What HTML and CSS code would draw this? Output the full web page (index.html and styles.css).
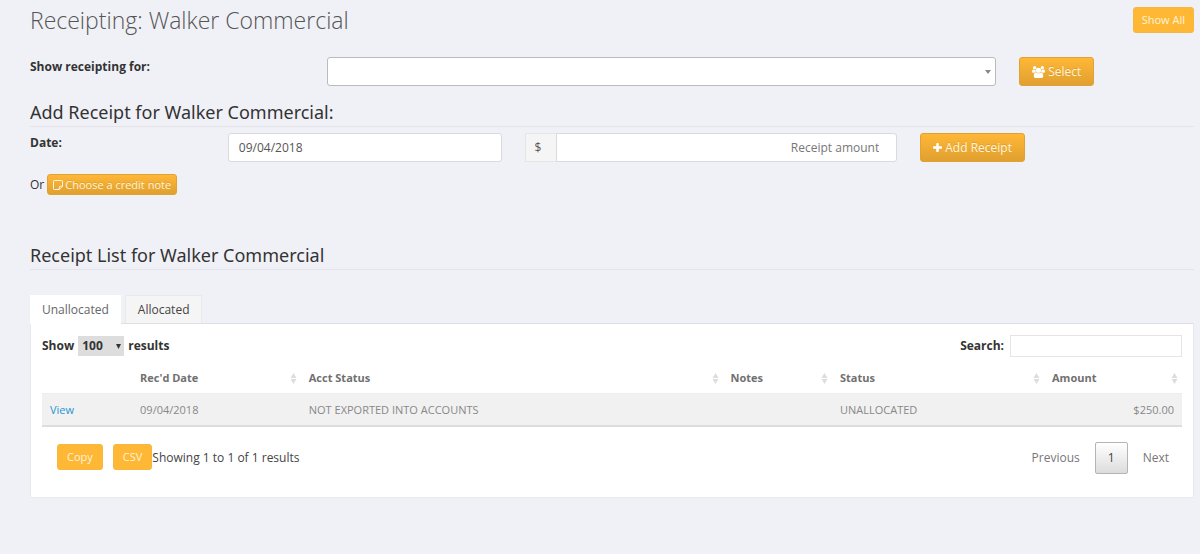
FILE: index.html
```html
<!DOCTYPE html>
<html lang="en">
<head>
<meta charset="utf-8">
<title>Receipting: Walker Commercial</title>
<link rel="stylesheet" href="styles.css">
</head>
<body>
<main class="page">
  <header class="page-head">
    <h1 class="page-title">Receipting: Walker Commercial</h1>
    <button type="button" class="btn btn-flat">Show All</button>
  </header>

  <form class="grid-row filter-row">
    <label class="col-label-wide" for="company">Show receipting for:</label>
    <select class="control select-company" id="company"><option></option></select>
    <button type="button" class="btn btn-grad">
      <svg class="icon icon-users" viewBox="0 0 1920 1792" aria-hidden="true"><path d="M593 896q-162 5-265 128h-134q-82 0-138-40.500t-56-118.500q0-353 124-353 6 0 43.500 21t97.500 42.500 119 21.500q67 0 133-23-5 37-5 66 0 139 81 256zm1071 637q0 120-73 189.500t-194 69.500h-874q-121 0-194-69.500t-73-189.500q0-53 3.500-103.500t14-109 26.500-108.500 43-97.500 62-81 85.500-53.500 111.500-20q10 0 43 21.500t73 48 107 48 135 21.500 135-21.500 107-48 73-48 43-21.500q61 0 111.500 20t85.500 53.500 62 81 43 97.500 26.500 108.500 14 109 3.500 103.500z"/><circle cx="384" cy="256" r="256"/><circle cx="960" cy="640" r="384"/><circle cx="1536" cy="256" r="256"/><path d="M1920 865q0 78-56 118.500t-138 40.500h-134q-103-123-265-128 81-117 81-256 0-29-5-66 66 23 133 23 59 0 119-21.500t97.500-42.500 43.500-21q124 0 124 353z"/></svg>
      Select
    </button>
  </form>

  <h2 class="section-title">Add Receipt for Walker Commercial:</h2>
  <form class="grid-row receipt-row">
    <label class="col-label" for="date">Date:</label>
    <input class="control col-date" id="date" type="text" value="09/04/2018">
    <div class="input-group">
      <label class="addon" for="amount">$</label>
      <input class="control amount" id="amount" type="text" placeholder="Receipt amount">
    </div>
    <button type="button" class="btn btn-grad">
      <svg class="icon icon-plus" viewBox="0 0 11 11" aria-hidden="true"><path d="M4 1q0-1 1-1h1q1 0 1 1v3h3q1 0 1 1v1q0 1-1 1H7v3q0 1-1 1H5q-1 0-1-1V7H1Q0 7 0 6V5q0-1 1-1h3z"/></svg>
      Add Receipt
    </button>
  </form>
  <div class="credit">
    Or
    <button type="button" class="btn btn-grad btn-small">
      <svg class="icon icon-note" viewBox="0 0 12 12" aria-hidden="true"><path d="M1.500.6h9q.9 0 .9.9v6L7.500 11.400h-6q-.9 0-.9-.9v-9q0-.9.9-.9zM11.400 7.500h-3q-.9 0-.9.9v3"/></svg>
      Choose a credit note
    </button>
  </div>

  <h2 class="section-title list-title">Receipt List for Walker Commercial</h2>

  <nav class="tabs">
    <button type="button" class="tab tab-active">Unallocated</button>
    <button type="button" class="tab">Allocated</button>
  </nav>
  <section class="panel">
    <div class="table-tools">
      <label class="tool">Show
        <select class="length"><option>100</option></select>
        results</label>
      <label class="tool">Search: <input class="search" type="text"></label>
    </div>
    <table class="receipts">
      <colgroup>
        <col class="c-view"><col class="c-date"><col class="c-acct"><col class="c-notes"><col class="c-status"><col class="c-amount">
      </colgroup>
      <thead>
        <tr>
          <th></th>
          <th><div class="sort">Rec'd Date<svg class="arrows" viewBox="0 0 7 11" aria-hidden="true"><path d="M3.500 0L6.500 5h-6zM.5 6h6l-3 5z"/></svg></div></th>
          <th><div class="sort">Acct Status<svg class="arrows" viewBox="0 0 7 11" aria-hidden="true"><path d="M3.500 0L6.500 5h-6zM.5 6h6l-3 5z"/></svg></div></th>
          <th><div class="sort">Notes<svg class="arrows" viewBox="0 0 7 11" aria-hidden="true"><path d="M3.500 0L6.500 5h-6zM.5 6h6l-3 5z"/></svg></div></th>
          <th><div class="sort">Status<svg class="arrows" viewBox="0 0 7 11" aria-hidden="true"><path d="M3.500 0L6.500 5h-6zM.5 6h6l-3 5z"/></svg></div></th>
          <th><div class="sort">Amount<svg class="arrows" viewBox="0 0 7 11" aria-hidden="true"><path d="M3.500 0L6.500 5h-6zM.5 6h6l-3 5z"/></svg></div></th>
        </tr>
      </thead>
      <tbody>
        <tr>
          <td><a class="view" href="#">View</a></td>
          <td>09/04/2018</td>
          <td>NOT EXPORTED INTO ACCOUNTS</td>
          <td></td>
          <td>UNALLOCATED</td>
          <td class="money">$250.00</td>
        </tr>
      </tbody>
    </table>
    <footer class="table-foot">
      <div class="exports">
        <button type="button" class="btn btn-flat">Copy</button>
        <button type="button" class="btn btn-flat">CSV</button>
      </div>
      <span class="info">Showing 1 to 1 of 1 results</span>
      <nav class="pager">
        <button type="button" class="page-btn">Previous</button>
        <button type="button" class="page-btn page-current">1</button>
        <button type="button" class="page-btn">Next</button>
      </nav>
    </footer>
  </section>
</main>
</body>
</html>
```
FILE: styles.css
```css
* { box-sizing: border-box; }
body {
  margin: 0;
  background: #f0f1f7;
  color: #333;
  font: 12px/18px "Open Sans", "Noto Sans", sans-serif;
}
button, input, select { font: inherit; color: inherit; }
button { cursor: pointer; }
.page { padding: 6px 6px 32px 30px; }

.page-head { display: flex; justify-content: space-between; align-items: center; }
.page-title { margin: 0; font-size: 23px; line-height: 28px; font-weight: 300; color: #555; }

.grid-row {
  display: grid;
  grid-template-columns: repeat(12, minmax(0, 1fr));
  column-gap: 23px;
  align-items: start;
}
.grid-row label { font-weight: 700; line-height: 20px; }
.grid-row .btn { justify-self: start; }
.filter-row { margin-top: 23px; }
.col-label-wide { grid-column: span 3; }
.col-label { grid-column: span 2; }
.col-date { grid-column: span 3; }
.filter-row .btn, .receipt-row .btn { grid-column: span 2; }

.control {
  width: 100%;
  height: 29px;
  padding: 0 10px;
  border: 1px solid #d9dadf;
  border-radius: 3px;
  background: #fff;
  color: #555;
}
.select-company {
  grid-column: span 7;
  border-color: #bbb;
  appearance: none;
  background: #fff url("data:image/svg+xml,%3Csvg xmlns='http://www.w3.org/2000/svg' viewBox='0 0 6 4'%3E%3Cpath d='M0 0h6L3 4z' fill='%23888'/%3E%3C/svg%3E") no-repeat right 4px center / 6px 4px;
}
.input-group { grid-column: span 4; display: flex; }
.grid-row .addon {
  flex: none;
  width: 31px;
  border: 1px solid #e5e5e5;
  border-right: 0;
  background: #f5f5f5;
  color: #555;
  font-weight: 400;
  line-height: 27px;
  padding-left: 9px;
}
.amount { flex: 1; min-width: 0; padding-right: 17px; border-radius: 0 3px 3px 0; text-align: right; }
.amount::placeholder { color: #777; opacity: 1; }

.btn {
  display: inline-flex;
  align-items: center;
  justify-content: center;
  border: 1px solid #f9b53c;
  border-radius: 3px;
  background: #ffb736;
  color: #fff4dc;
  white-space: nowrap;
}
.btn-flat { height: 26px; padding: 0 8px; font-size: 11px; }
.btn-grad {
  height: 29px;
  padding: 0 12px;
  gap: 3px;
  border-color: #e0a233;
  background: linear-gradient(#ffb736, #e0a030);
  text-shadow: 0 -1px 0 rgba(0, 0, 0, .1);
}
.btn-small { height: 21px; padding: 0 5px; gap: 2px; font-size: 11px; }
.icon { flex: none; fill: #fff; }
.icon-users { width: 13px; height: 12px; }
.icon-plus { width: 9px; height: 9px; }
.icon-note { width: 10px; height: 10px; fill: none; stroke: #fff4dc; stroke-width: 1.2; }

.section-title {
  margin: 14px 0 6px;
  padding-bottom: 1px;
  border-bottom: 1px solid #e5e5e9;
  font-family: "Noto Sans", "Open Sans", sans-serif;
  font-size: 18px;
  line-height: 25px;
  font-weight: 400;
}
.credit { display: flex; align-items: center; gap: 3px; margin-top: 12px; }
.list-title { margin: 48px 0 25px; }

.tabs { display: flex; gap: 4px; }
.tab {
  height: 28px;
  padding: 0 12px;
  border: 1px solid #e9e9ec;
  border-bottom: 0;
  background: #f5f5f5;
  color: #444;
}
.tab-active { height: 29px; margin-bottom: -1px; padding: 0 11px; border-color: #fff; background: #fff; color: #666; position: relative; }
.panel {
  padding: 11px 11px 23px;
  border: 1px solid #e8e9ed;
  border-top-color: #dfe0e5;
  background: #fff;
}
.table-tools { display: flex; justify-content: space-between; align-items: center; }
.tool { display: flex; align-items: center; gap: 4px; font-weight: 700; }
.length {
  width: 46px;
  height: 20px;
  padding: 0 4px;
  border: 0;
  border-radius: 0;
  appearance: none;
  background: #ddd url("data:image/svg+xml,%3Csvg xmlns='http://www.w3.org/2000/svg' viewBox='0 0 5 5'%3E%3Cpath d='M0 0h5L2.500 5z' fill='%23333'/%3E%3C/svg%3E") no-repeat right 3px center / 5px 5px;
}
.search { width: 172px; height: 22px; margin-left: 2px; padding: 0 4px; border: 1px solid #e5e5e5; background: #fff; font-weight: 400; }

.receipts { width: 100%; margin-top: 5px; border-collapse: collapse; table-layout: fixed; font-size: 11px; line-height: 16px; color: #777; border-bottom: 2px solid #ddd; }
.receipts th, .receipts td { padding: 8px 8px 7px; text-align: left; }
.receipts th { color: #707070; }
.receipts td { border-top: 1px solid #eee; background: #f1f1f1; color: #888; }
.receipts .money { text-align: right; }
.sort { display: flex; align-items: center; justify-content: space-between; }
.arrows { width: 7px; height: 11px; margin-right: -4px; fill: #ddd; }
.c-view { width: 7.9%; }
.c-date { width: 14.8%; }
.c-acct { width: 37%; }
.c-notes { width: 9.6%; }
.c-status { width: 18.6%; }
.c-amount { width: 12.1%; }
.view { color: #2a94d6; text-decoration: none; }

.table-foot { display: flex; align-items: center; margin-top: 15px; }
.exports { display: flex; gap: 10px; margin-left: 15px; padding-bottom: 3px; }
.exports .btn { padding: 0 9px; }
.info { color: #444; }
.pager { display: flex; gap: 2px; margin-left: auto; }
.page-btn { height: 32px; padding: 0 12px; border: 1px solid transparent; border-radius: 2px; background: none; color: #777; }
.page-current { border-color: #b5b5b5; background: linear-gradient(#fff, #dcdcdc); color: #444; }
```
